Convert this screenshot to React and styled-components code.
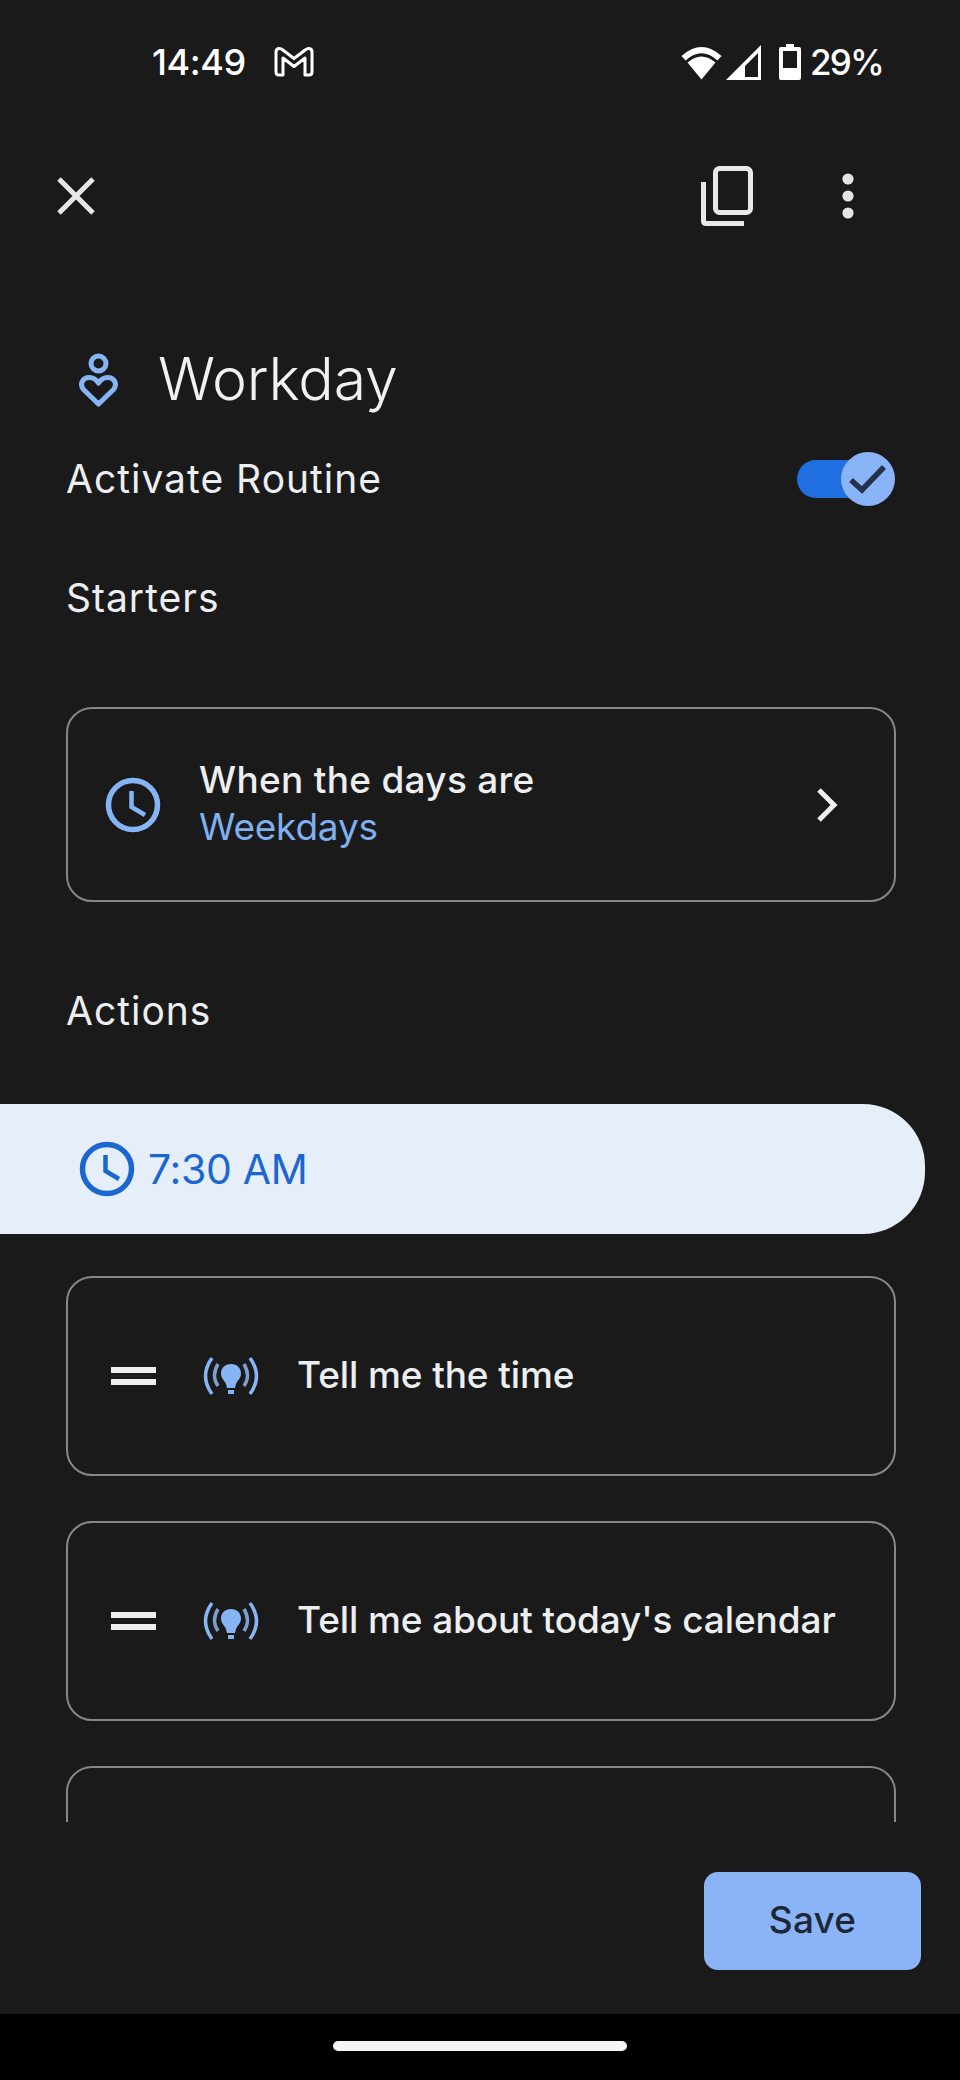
import React from "react";
import styled, { createGlobalStyle } from "styled-components";

const Global = createGlobalStyle`
  html, body { margin: 0; padding: 0; background: #1a1a1b; }
  * { box-sizing: border-box; }
`;

const Screen = styled.div`
  width: 960px;
  height: 2080px;
  display: flex;
  flex-direction: column;
  background: #1a1a1b;
  font-family: Inter, Roboto, sans-serif;
  color: #eceef0;
  overflow: hidden;
`;
const Main = styled.main`
  height: 1822px;
  flex: none;
  overflow: hidden;
  display: flex;
  flex-direction: column;
`;
const StatusBar = styled.div`
  height: 124px;
  flex: none;
  display: flex;
  align-items: center;
  padding: 0 77px 0 152px;
  color: #fff;
`;
const Clock = styled.span`
  font: 500 36px/1 Inter, sans-serif;
  letter-spacing: -0.4px;
`;
const Pct = styled.span`
  font: 500 35px/1 Inter, sans-serif;
  letter-spacing: -1.8px;
  margin-left: 5px;
`;
const Spacer = styled.div`
  flex: 1;
`;
const StatusIcons = styled.div`
  display: flex;
  align-items: center;
  gap: 4px;
`;
const Toolbar = styled.div`
  height: 144px;
  flex: none;
  display: flex;
  align-items: center;
  padding: 0 106px 0 57px;
`;
const Body = styled.div`
  padding: 0 64px 0 66px;
  display: flex;
  flex-direction: column;
  flex: none;
`;
const TitleRow = styled.div`
  margin-top: 68px;
  height: 88px;
  display: flex;
  align-items: center;
  padding-left: 13px;
  gap: 39px;
`;
const Title = styled.h1`
  margin: 0;
  padding-bottom: 4px;
  font: 300 59px/1 Inter, sans-serif;
  letter-spacing: -0.1px;
  color: #f1f1f1;
`;
const ToggleRow = styled.div`
  margin-top: 25px;
  height: 60px;
  display: flex;
  align-items: center;
  justify-content: space-between;
`;
const RowLabel = styled.span`
  padding-bottom: 2px;
  font: 400 39px/1 Inter, sans-serif;
  letter-spacing: 1px;
`;
const Toggle = styled.div`
  position: relative;
  width: 83px;
  height: 38px;
  margin-right: 16px;
  border-radius: 19px;
  background: #1f6fe0;
`;
const Thumb = styled.div`
  position: absolute;
  right: -15px;
  top: -8px;
  width: 54px;
  height: 54px;
  border-radius: 50%;
  background: #8ab4f8;
  display: flex;
  align-items: center;
  justify-content: center;
`;
const SectionLabel = styled.h2`
  margin: ${(p) => p.$top}px 0 0;
  height: 50px;
  display: flex;
  align-items: center;
  font: 400 39px/1 Inter, sans-serif;
  letter-spacing: 1px;
`;
const Card = styled.div`
  margin-top: ${(p) => p.$top}px;
  height: ${(p) => p.$height}px;
  flex: none;
  border: 2px solid #85868a;
  border-radius: 26px;
  display: flex;
  align-items: center;
  padding: ${(p) => p.$pad};
`;
const StarterText = styled.div`
  margin-left: 38px;
  padding-bottom: 2px;
  flex: 1;
  display: flex;
  flex-direction: column;
  gap: 9px;
`;
const StarterTitle = styled.span`
  font: 500 37px/38px Inter, sans-serif;
  letter-spacing: 0.3px;
`;
const StarterValue = styled.span`
  font: 400 37px/38px Inter, sans-serif;
  letter-spacing: -0.2px;
  color: #7fb0f0;
`;
const ScheduledPill = styled.div`
  margin: 69px -29px 0 -66px;
  height: 130px;
  flex: none;
  background: #e6eefa;
  border-radius: 0 62px 62px 0;
  display: flex;
  align-items: center;
  padding-left: 79px;
  gap: 13px;
  color: #1a67d2;
`;
const PillText = styled.span`
  font: 400 41px/1 Inter, sans-serif;
  letter-spacing: -0.3px;
`;
const DragHandle = styled.div`
  width: 45px;
  height: 18px;
  flex: none;
  display: flex;
  flex-direction: column;
  justify-content: space-between;
  &::before, &::after {
    content: "";
    height: 6px;
    background: #eceef0;
  }
`;
const ActionText = styled.span`
  margin-left: 38px;
  padding-bottom: 3px;
  font: 500 37px/1 Inter, sans-serif;
  letter-spacing: -0.1px;
  white-space: nowrap;
`;
const Footer = styled.footer`
  height: 192px;
  flex: none;
  display: flex;
  justify-content: flex-end;
  align-items: flex-start;
  padding: 50px 39px 0 0;
`;
const SaveButton = styled.button`
  width: 217px;
  height: 98px;
  border: 0;
  padding: 0 0 3px;
  border-radius: 14px;
  background: #8ab4f5;
  color: #1d2738;
  font: 500 37px/1 Inter, sans-serif;
  letter-spacing: 0.2px;
`;
const NavBar = styled.div`
  height: 66px;
  flex: none;
  background: #000;
  display: flex;
  justify-content: center;
  padding-top: 27px;
`;
const HomeIndicator = styled.div`
  width: 294px;
  height: 10px;
  border-radius: 5px;
  background: #f5f5f5;
`;
const IconSlot = styled.div`
  flex: none;
  display: flex;
  margin-left: ${(p) => p.$left || 0}px;
`;

const GmailIcon = () => (
  <svg width="40" height="30" viewBox="0 0 40 30" fill="none" stroke="#fff" strokeWidth="3" strokeLinejoin="round">
    <path d="M2 5 Q2 1.5 5.5 1.5 Q7 1.5 8.5 2.8 L20 11.5 L31.5 2.8 Q33 1.5 34.5 1.5 Q38 1.5 38 5 V25 Q38 28 35 28 H31 V11 L20 19.5 L9 11 V28 H5 Q2 28 2 25 Z" />
  </svg>
);
const WifiIcon = () => (
  <svg width="41" height="35" viewBox="0 0 41 35">
    <path fill="#fff" d="M0.5 11 Q20.5 -7 40.5 11 L36.5 15.5 Q20.5 1 4.5 15.5 Z" />
    <path fill="#fff" d="M6.5 17.5 Q20.5 5.5 34.5 17.5 L20.5 34.5 Z" />
  </svg>
);
const SignalIcon = () => (
  <svg width="36" height="35" viewBox="0 0 36 35">
    <path fill="#fff" fillRule="evenodd" d="M35 0 V35 H0 Z M32 8 L19 21 V32 H32 Z" />
  </svg>
);
const BatteryIcon = () => (
  <svg width="22" height="36" viewBox="0 0 22 36">
    <path fill="#fff" fillRule="evenodd" d="M7 0 H15 V3 H20 Q22 3 22 5 V34 Q22 36 20 36 H2 Q0 36 0 34 V5 Q0 3 2 3 H7 Z M4 7 V24 H18 V7 Z" />
  </svg>
);
const CloseIcon = () => (
  <svg width="38" height="38" viewBox="0 0 38 38" stroke="#e8e8e8" strokeWidth="5">
    <path d="M2 2 L36 36 M36 2 L2 36" />
  </svg>
);
const CopyIcon = () => (
  <svg width="52" height="60" viewBox="0 0 52 60" fill="none" stroke="#e8e8e8" strokeWidth="5">
    <rect x="14.5" y="2.5" width="35" height="44" rx="4" />
    <path d="M2.5 16 V55 Q2.5 57.5 5 57.5 H43" />
  </svg>
);
const DotsIcon = () => (
  <svg width="12" height="46" viewBox="0 0 12 46" fill="#e4e4e4">
    <circle cx="6" cy="6" r="5.6" />
    <circle cx="6" cy="23" r="5.6" />
    <circle cx="6" cy="40" r="5.6" />
  </svg>
);
const RoutineIcon = () => (
  <svg width="40" height="56" viewBox="0 0 40 56" fill="none" stroke="#86b5f5" strokeWidth="5" strokeLinejoin="round">
    <circle cx="19.5" cy="11.5" r="7.5" />
    <path d="M19.5 52 L4.5 37.5 C0 31.5 4 25.5 10.5 25.5 C14 25.5 17.5 28 19.5 31 C21.5 28 25 25.5 28.5 25.5 C35 25.5 39 31.5 34.5 37.5 Z" />
  </svg>
);
const ClockIcon = ({ color }) => (
  <svg width="56" height="56" viewBox="0 0 56 56" fill="none" stroke={color} strokeWidth="5.5">
    <circle cx="28" cy="28" r="24.5" />
    <path d="M26.5 14 V30 L40 38" strokeWidth="4.5" />
  </svg>
);
const CheckIcon = () => (
  <svg width="38" height="30" viewBox="0 0 38 30" fill="none" stroke="#25324a" strokeWidth="5.5">
    <path d="M2 16 L13 26 L35 3" />
  </svg>
);
const ChevronIcon = () => (
  <svg width="22" height="36" viewBox="0 0 22 36" fill="none" stroke="#f0f0f0" strokeWidth="5">
    <path d="M3 3 L18 18 L3 33" />
  </svg>
);
const BroadcastBulb = () => (
  <svg width="56" height="40" viewBox="0 0 56 40" fill="none">
    <g stroke="#86b5f5" strokeWidth="3.5">
      <path d="M9 2 Q-4 20 9 38" />
      <path d="M47 2 Q60 20 47 38" />
      <path d="M15 8 Q8 20 15 30" stroke="#7d9fd0" />
      <path d="M41 8 Q48 20 41 30" stroke="#7d9fd0" />
    </g>
    <path fill="#86b5f5" d="M28 8 C34 8 38 12 38 17.5 C38 22 35 24 33 28 L32 32 H24 L23 28 C21 24 18 22 18 17.5 C18 12 22 8 28 8 Z" />
    <rect x="25" y="34" width="6" height="4" fill="#86b5f5" />
  </svg>
);

const ActionCard = ({ top, children }) => (
  <Card $top={top} $height={200} $pad="0 0 0 43px">
    <DragHandle />
    <IconSlot $left={47}><BroadcastBulb /></IconSlot>
    <ActionText>{children}</ActionText>
  </Card>
);

export default function App() {
  return (
    <Screen>
      <Global />
      <Main>
        <StatusBar>
          <Clock>14:49</Clock>
          <IconSlot $left={28}><GmailIcon /></IconSlot>
          <Spacer />
          <StatusIcons>
            <WifiIcon />
            <SignalIcon />
            <IconSlot $left={13}><BatteryIcon /></IconSlot>
            <Pct>29%</Pct>
          </StatusIcons>
        </StatusBar>
        <Toolbar>
          <CloseIcon />
          <Spacer />
          <CopyIcon />
          <IconSlot $left={89}><DotsIcon /></IconSlot>
        </Toolbar>
        <Body>
          <TitleRow>
            <RoutineIcon />
            <Title>Workday</Title>
          </TitleRow>
          <ToggleRow>
            <RowLabel>Activate Routine</RowLabel>
            <Toggle><Thumb><CheckIcon /></Thumb></Toggle>
          </ToggleRow>
          <SectionLabel $top={63}>Starters</SectionLabel>
          <Card $top={85} $height={195} $pad="0 56px 0 37px">
            <ClockIcon color="#86b5f5" />
            <StarterText>
              <StarterTitle>When the days are</StarterTitle>
              <StarterValue>Weekdays</StarterValue>
            </StarterText>
            <ChevronIcon />
          </Card>
          <SectionLabel $top={83}>Actions</SectionLabel>
          <ScheduledPill>
            <ClockIcon color="#1a67d2" />
            <PillText>7:30 AM</PillText>
          </ScheduledPill>
          <ActionCard top={42}>Tell me the time</ActionCard>
          <ActionCard top={45}>Tell me about today's calendar</ActionCard>
          <Card $top={45} $height={200} $pad="0" />
        </Body>
      </Main>
      <Footer>
        <SaveButton>Save</SaveButton>
      </Footer>
      <NavBar><HomeIndicator /></NavBar>
    </Screen>
  );
}
